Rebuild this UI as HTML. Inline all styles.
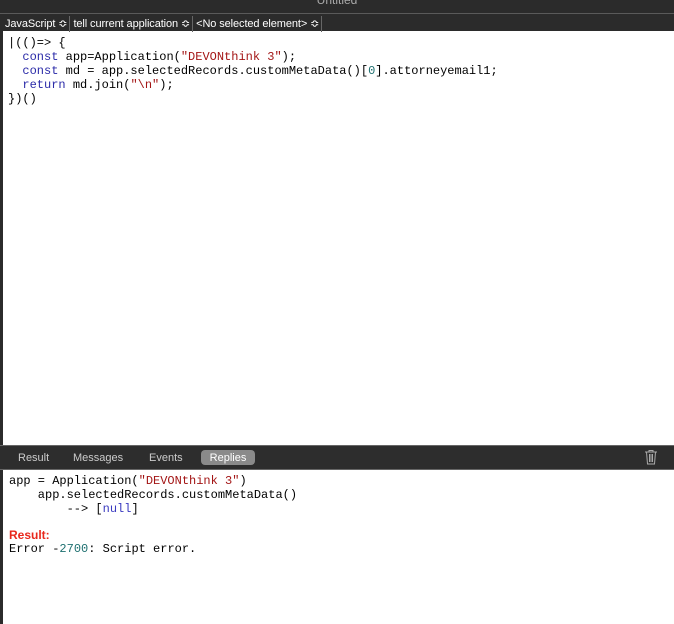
<!DOCTYPE html><html><head><style>
body{margin:0;width:674px;height:624px;background:#fff;position:relative;overflow:hidden;font-family:"Liberation Sans",sans-serif}
.abs{position:absolute}
.mono{font-family:"Liberation Mono",monospace;font-size:12px;line-height:14px;white-space:pre;color:#000}
.k{color:#2a2aa8}.s{color:#a31515}.n{color:#1e7070}.nl{color:#3a3ac0}
.tb span{display:inline-block;font-size:11px;color:#fff;padding:0 2px 0 3px;border-right:1px solid #666;height:16px;line-height:16px;letter-spacing:-0.1px}
</style></head><body>
<div class="abs" style="left:0;top:0;width:674px;height:13px;background:#2b2b2b"></div>
<div class="abs" style="left:300px;top:-7px;width:74px;text-align:center;color:#aaa;font-size:12px">Untitled</div>
<div class="abs" style="left:0;top:13px;width:674px;height:1px;background:#5a5a5a"></div>
<div class="abs tb" style="left:0;top:14px;width:674px;height:17px;background:#2b2b2b;padding-left:2px;box-sizing:border-box"><span>JavaScript ≎</span><span>tell current application ≎</span><span>&lt;No selected element&gt; ≎</span></div>
<div class="abs" style="left:0;top:31px;width:3px;height:593px;background:#2b2b2b"></div>
<div class="abs mono" style="left:8px;top:36px">|(()=&gt; {
  <span class="k">const</span> app=Application(<span class="s">"DEVONthink 3"</span>);
  <span class="k">const</span> md = app.selectedRecords.customMetaData()[<span class="n">0</span>].attorneyemail1;
  <span class="k">return</span> md.join(<span class="s">"\n"</span>);
})()</div>
<div class="abs" style="left:0;top:445px;width:674px;height:25px;background:#2d2d2d;border-top:1px solid #666;border-bottom:1px solid #666;box-sizing:border-box"></div>
<div class="abs" style="left:18px;top:452px;font-size:11px;color:#ccc">Result</div>
<div class="abs" style="left:73px;top:452px;font-size:11px;color:#ccc">Messages</div>
<div class="abs" style="left:149px;top:452px;font-size:11px;color:#ccc">Events</div>
<div class="abs" style="left:201px;top:450px;width:54px;height:15px;background:#8a8a8a;border-radius:4px;font-size:11px;color:#fff;text-align:center;line-height:16px">Replies</div>
<svg class="abs" style="left:644px;top:449px" width="14" height="16" viewBox="0 0 14 16" fill="none" stroke="#aaa" stroke-width="1"><path d="M1 3h12M5 3V1.5h4V3M2.5 3l1 12h7l1-12M5.5 5v8M7 5v8M8.5 5v8"/></svg>
<div class="abs mono" style="left:9px;top:474px">app = Application(<span class="s">"DEVONthink 3"</span>)
    app.selectedRecords.customMetaData()
        --&gt; [<span class="nl">null</span>]
</div>
<div class="abs" style="left:9px;top:528px;font-size:12px;font-weight:bold;color:#e8281c">Result:</div>
<div class="abs mono" style="left:9px;top:542px">Error -<span class="n">2700</span>: Script error.</div>
</body></html>
